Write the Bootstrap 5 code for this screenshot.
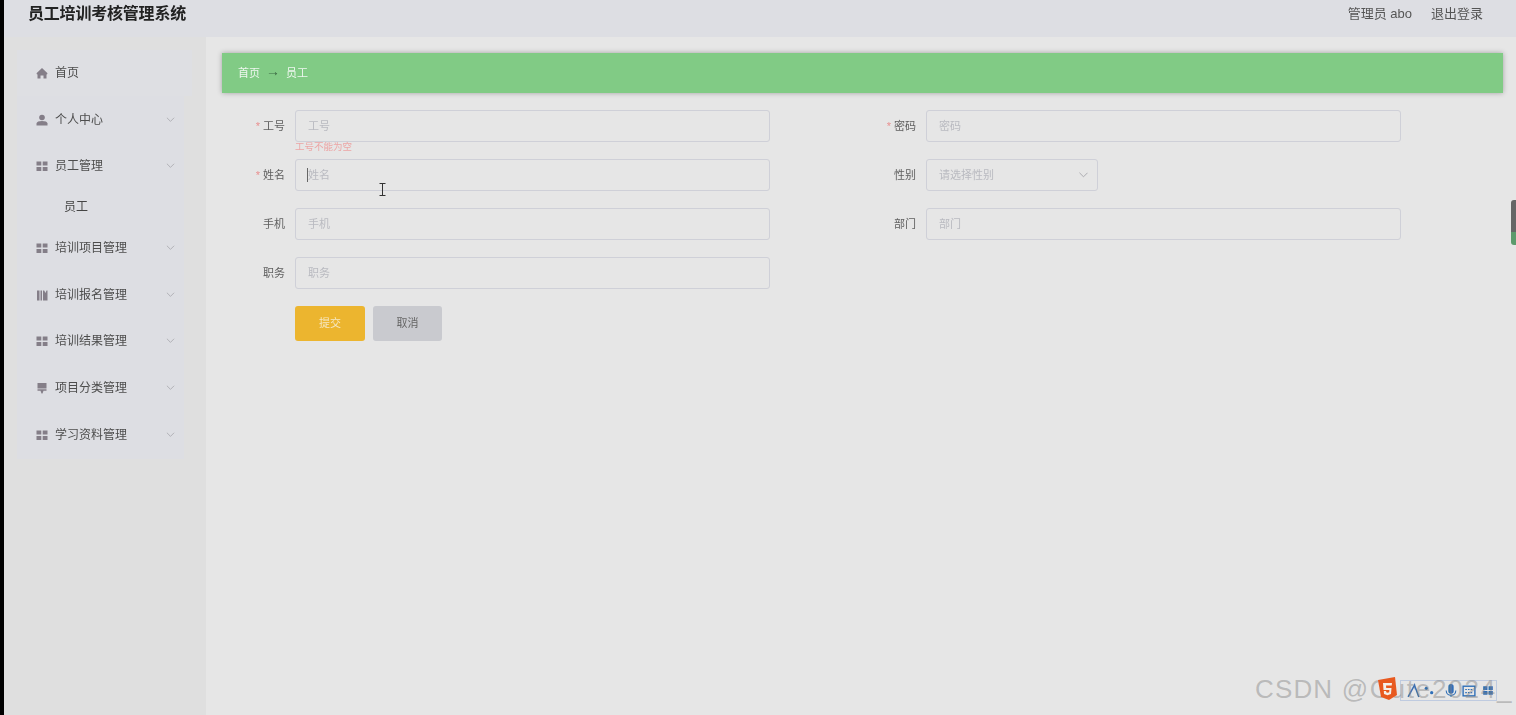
<!DOCTYPE html>
<html lang="zh-CN">
<head>
<meta charset="utf-8">
<title>员工培训考核管理系统</title>
<link href="https://cdn.jsdelivr.net/npm/bootstrap@5.3.0/dist/css/bootstrap.min.css" rel="stylesheet">
<style>
html,body{height:715px;overflow:hidden}
body{background:#000;padding-left:4px;font-family:"Liberation Sans","Noto Sans CJK SC",sans-serif;color:#444;position:relative}
.shell{height:715px;background:#e6e6e6;filter:blur(.4px)}
.topbar{height:37px;background:#dddee3;padding:0 33px 0 24px}
.brand-name{font-size:16px;font-weight:700;color:#222;margin-top:-9px;letter-spacing:-.2px}
.top-links{font-size:13px;color:#555;gap:19px;margin-top:-9px}
.side{width:202px;background:#dfdfdf;padding:12.800px 0 0 13px;flex:none}
.side-panel{width:167px;height:409px;background:#dddee3;list-style:none;margin:0;padding:0}
.side-item{height:46.67px;padding-left:19px;padding-right:9px;font-size:12px;color:#4d4d4d;gap:7px}
.side-item.is-first{width:175px;background:#dedfe3;padding-right:18px}
.side-sub{height:35px;padding-left:47px;font-size:12px;color:#444}
.side-item svg.mi{width:12px;height:12px;fill:#847e88;flex:none}
.side-item svg.ch{width:9px;height:6px;margin-left:auto;fill:none;stroke:#adadb2;stroke-width:1}
.content{padding:16px 0 0 16px;min-width:0}
.crumb-bar{width:1281px;height:40px;background:#81cb85;box-shadow:0 0 5px rgba(0,0,0,.3);padding-left:16px;font-size:11px;color:#eef7ef;gap:6px;margin-bottom:17px}
.crumb-bar .arrow{font-size:14px;color:#3d6b45;line-height:1;margin-top:-5px}
.form-line{height:49px}
.form-cell{width:631px;gap:10px;height:32px}
.field-label{width:63px;text-align:right;font-size:11px;color:#5f5f5f;margin:0;flex:none}
.field-label i{font-style:normal;color:#e98f8f;margin-right:3px}
.form-control.field,.form-select.field{height:32px;width:475px;background-color:#e6e6e6;border:1px solid #cfd0d8;border-radius:3px;font-size:11px;padding:0 12px;color:#666;box-shadow:none}
.form-control.field::placeholder{color:#b9bac0}
.form-select.field.narrow{width:172px;color:#b9bac0;padding-right:28px;background-image:url("data:image/svg+xml,%3csvg xmlns='http://www.w3.org/2000/svg' viewBox='0 0 10 6'%3e%3cpath fill='none' stroke='%23a5a5aa' d='M.5.5 5 5 9.500 .5'/%3e%3c/svg%3e");background-size:9px 6px;background-position:right 9px center}
.input-wrap{position:relative;width:475px}
.err-note{position:absolute;left:0;top:33px;font-size:9.500px;line-height:8px;color:#eca5a5;white-space:nowrap}
.fake-caret{position:absolute;left:12px;top:9px;width:1px;height:14px;background:#666}
.act-btn{width:70px;height:35px;border-radius:3px;font-size:11px;padding:0;border:0}
.act-ok,.act-ok:hover{background:#ecb52f;color:#f6e8c4}
.act-no,.act-no:hover{width:69px;background:#c9cacf;color:#666}
.btn-row{padding-left:73px;gap:8px}
.ibeam{position:absolute;left:378px;top:183px;width:9px;height:13px}
.scroll-tab{position:absolute;right:0;top:200px;width:5px;height:45px;background:linear-gradient(#666 0 72%,#5d9a6c 72%);border-radius:3px 0 0 3px}
.mark-wm{position:absolute;left:1255px;top:672px;font-size:26px;letter-spacing:1.150px;line-height:34px;color:rgba(130,130,130,.45);white-space:nowrap}
.mark-wm span{letter-spacing:1.800px}
.ime-box{position:absolute;left:1400px;top:680px;width:97px;height:21px;border:1px solid #bfcbe0}
.ime-box svg{position:absolute;top:2px;width:14px;height:15px}
.ime-a{left:6px}.ime-b{left:21px}.ime-c{left:43px}.ime-d{left:61px}.ime-e{left:80px}
.h5-logo{position:absolute;left:1378px;top:677px;width:19px;height:23px}
</style>
</head>
<body>
<div class="shell d-flex flex-column">
  <header class="topbar d-flex align-items-center justify-content-between flex-none">
    <div class="brand-name">员工培训考核管理系统</div>
    <div class="top-links d-flex"><span>管理员 abo</span><span>退出登录</span></div>
  </header>
  <div class="d-flex flex-grow-1">
    <aside class="side">
      <ul class="side-panel">
        <li class="side-item is-first d-flex align-items-center"><svg class="mi" viewBox="0 0 12 12"><path d="M6 1 .5 6.200 1 7.500l.5-.3V11.500h3V8.500h3v3h3V7.200l.5.300.5-1.300z"/></svg>首页</li>
        <li class="side-item d-flex align-items-center"><svg class="mi" viewBox="0 0 12 12"><circle cx="6" cy="3.500" r="2.800"/><path d="M.5 11.500V9.500C.5 7.800 3 7 6 7s5.500 .8 5.500 2.500v2z"/></svg>个人中心<svg class="ch" viewBox="0 0 10 6"><path d="M1 .5 5 4.500 9 .5"/></svg></li>
        <li class="side-item d-flex align-items-center"><svg class="mi" viewBox="0 0 12 12"><path d="M.5 1.500h4.800v4H.5zM6.700 1.500h4.800v4H6.700zM.5 7h4.800v4H.5zM6.700 7h4.800v4H6.700z"/></svg>员工管理<svg class="ch" viewBox="0 0 10 6"><path d="M1 .5 5 4.500 9 .5"/></svg></li>
        <li class="side-sub d-flex align-items-center">员工</li>
        <li class="side-item d-flex align-items-center"><svg class="mi" viewBox="0 0 12 12"><path d="M.5 1.500h4.800v4H.5zM6.700 1.500h4.800v4H6.700zM.5 7h4.800v4H.5zM6.700 7h4.800v4H6.700z"/></svg>培训项目管理<svg class="ch" viewBox="0 0 10 6"><path d="M1 .5 5 4.500 9 .5"/></svg></li>
        <li class="side-item d-flex align-items-center"><svg class="mi" viewBox="0 0 12 12"><path d="M1 1.500h2.500v10H1zM4.500 1.500H6v10H4.500zM7 1.500h1.200l1.300 2.500 1-2.500h1v10H7z"/></svg>培训报名管理<svg class="ch" viewBox="0 0 10 6"><path d="M1 .5 5 4.500 9 .5"/></svg></li>
        <li class="side-item d-flex align-items-center"><svg class="mi" viewBox="0 0 12 12"><path d="M.5 1.500h4.800v4H.5zM6.700 1.500h4.800v4H6.700zM.5 7h4.800v4H.5zM6.700 7h4.800v4H6.700z"/></svg>培训结果管理<svg class="ch" viewBox="0 0 10 6"><path d="M1 .5 5 4.500 9 .5"/></svg></li>
        <li class="side-item d-flex align-items-center"><svg class="mi" viewBox="0 0 12 12"><path d="M1.500 1h9v5.500h-9zM1.500 7.300h9v1.500h-3L6.500 11.500h-1L4.500 8.800h-3z"/></svg>项目分类管理<svg class="ch" viewBox="0 0 10 6"><path d="M1 .5 5 4.500 9 .5"/></svg></li>
        <li class="side-item d-flex align-items-center"><svg class="mi" viewBox="0 0 12 12"><path d="M.5 1.500h4.800v4H.5zM6.700 1.500h4.800v4H6.700zM.5 7h4.800v4H.5zM6.700 7h4.800v4H6.700z"/></svg>学习资料管理<svg class="ch" viewBox="0 0 10 6"><path d="M1 .5 5 4.500 9 .5"/></svg></li>
      </ul>
    </aside>
    <main class="content flex-grow-1">
      <div class="crumb-bar d-flex align-items-center"><span>首页</span><span class="arrow">→</span><span>员工</span></div>
      <form>
        <div class="form-line d-flex">
          <div class="form-cell d-flex align-items-center">
            <label class="field-label"><i>*</i>工号</label>
            <div class="input-wrap"><input class="form-control field" placeholder="工号"><div class="err-note">工号不能为空</div></div>
          </div>
          <div class="form-cell d-flex align-items-center">
            <label class="field-label"><i>*</i>密码</label>
            <input class="form-control field" placeholder="密码">
          </div>
        </div>
        <div class="form-line d-flex">
          <div class="form-cell d-flex align-items-center">
            <label class="field-label"><i>*</i>姓名</label>
            <div class="input-wrap"><input class="form-control field" placeholder="姓名"><span class="fake-caret"></span></div>
          </div>
          <div class="form-cell d-flex align-items-center">
            <label class="field-label">性别</label>
            <select class="form-select field narrow"><option>请选择性别</option></select>
          </div>
        </div>
        <div class="form-line d-flex">
          <div class="form-cell d-flex align-items-center">
            <label class="field-label">手机</label>
            <input class="form-control field" placeholder="手机">
          </div>
          <div class="form-cell d-flex align-items-center">
            <label class="field-label">部门</label>
            <input class="form-control field" placeholder="部门">
          </div>
        </div>
        <div class="form-line d-flex">
          <div class="form-cell d-flex align-items-center">
            <label class="field-label">职务</label>
            <input class="form-control field" placeholder="职务">
          </div>
        </div>
        <div class="btn-row d-flex">
          <button type="button" class="btn act-btn act-ok">提交</button>
          <button type="button" class="btn act-btn act-no">取消</button>
        </div>
      </form>
    </main>
  </div>
</div>
<svg class="ibeam" viewBox="0 0 9 13"><path d="M1.500.5h6M4.500.5v12M1.500 12.500h6" fill="none" stroke="#333" stroke-width="1"/></svg>
<div class="scroll-tab"></div>
<div class="ime-box">
  <svg class="ime-a" viewBox="0 0 13 14"><path d="M1 13 7 2l1 4M7 2l4 11" fill="none" stroke="#3d6fb0" stroke-width="1.400"/></svg>
  <svg class="ime-b" viewBox="0 0 13 14"><circle cx="4" cy="5" r="1.500" fill="#2f6fb8"/><circle cx="9" cy="9" r="1.500" fill="#2f6fb8"/></svg>
  <svg class="ime-c" viewBox="0 0 13 14"><rect x="4" y="1" width="5" height="9" rx="2.500" fill="#2f6fb8"/><path d="M2 7c0 6 9 6 9 0M6.500 11v2" fill="none" stroke="#2f6fb8"/></svg>
  <svg class="ime-d" viewBox="0 0 13 14"><rect x="1" y="3" width="11" height="9" fill="none" stroke="#2f6fb8" stroke-width="1.300"/><path d="M3 6h7M3 9h7" stroke="#2f6fb8" stroke-dasharray="1.500 1"/></svg>
  <svg class="ime-e" viewBox="0 0 13 14"><path d="M2 3h4v3.500H2zM7 3h4v3.500H7zM2 7.500h4V11H2zM7 7.500h4V11H7z" fill="#2f6fb8"/></svg>
</div>
<div class="mark-wm">CSDN <span>@Cute2024_</span></div>
<svg class="h5-logo" viewBox="0 0 19 23"><path d="M0 3 17 0l2 18-8 5-8-3z" fill="#e8591f"/><path d="M5 6h9l-.3 2.500H8l.2 2.500h5.300l-.5 6-3.500 1.300L6 17l-.2-3h2.300l.1 1.300 1.500.5 1.500-.5.200-2.300H5.500z" fill="#f4f0ea"/></svg>
</body>
</html>
